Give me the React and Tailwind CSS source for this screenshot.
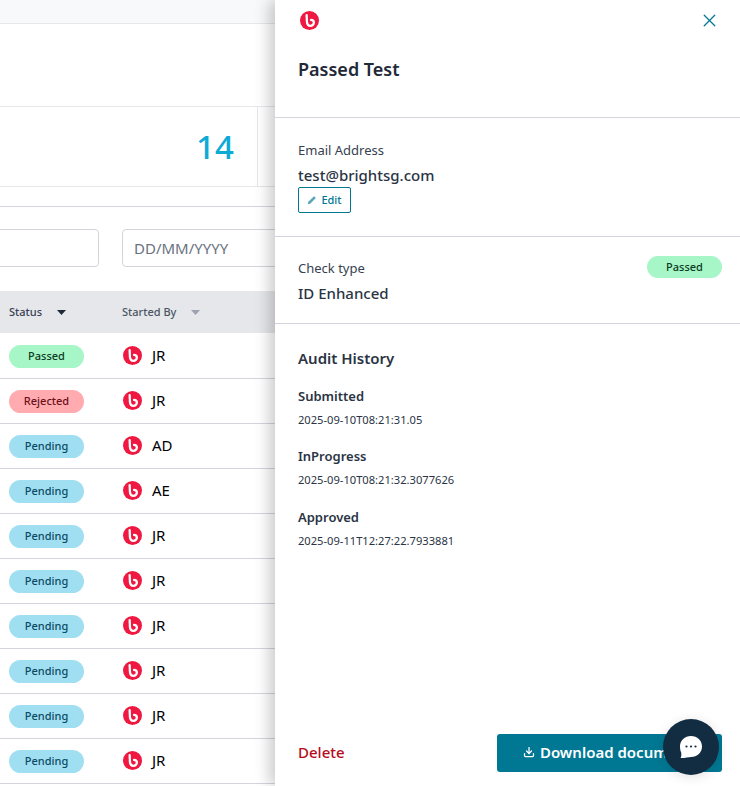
import { Download, X } from "lucide-react";

const rows = [
  { status: "Passed", by: "JR" },
  { status: "Rejected", by: "JR" },
  { status: "Pending", by: "AD" },
  { status: "Pending", by: "AE" },
  { status: "Pending", by: "JR" },
  { status: "Pending", by: "JR" },
  { status: "Pending", by: "JR" },
  { status: "Pending", by: "JR" },
  { status: "Pending", by: "JR" },
  { status: "Pending", by: "JR" },
];

const pillStyles = {
  Passed: "bg-[#a6f6c8] text-[#0d3b22]",
  Rejected: "bg-[#ffabb0] text-[#6b0f1a]",
  Pending: "bg-[#a0dff2] text-[#0c4a63]",
};

const BrandLogo = ({ className }) => (
  <svg viewBox="0 0 20 20" className={className}>
    <circle cx="10" cy="10" r="10" fill="#ee1841" />
    <path
      d="M7 4.4 L7.3 11.5 C7.5 14 9 15.6 11 15.6 C13 15.6 14.6 14 14.6 12.2 C14.6 10.5 13.4 9.4 11.6 9.4"
      fill="none"
      stroke="#fff"
      strokeWidth="2.4"
      strokeLinecap="round"
    />
  </svg>
);

const Pill = ({ status, className }) => (
  <span
    className={`flex w-[75px] items-center justify-center rounded-full text-[11px] font-medium ${pillStyles[status]} ${className}`}
  >
    {status}
  </span>
);

const Caret = ({ color }) => (
  <svg viewBox="0 0 9 5" className="h-[5px] w-[9px]">
    <path d="M0 0 H9 L4.5 5 Z" fill={color} />
  </svg>
);

const AuditEntry = ({ title, time, className }) => (
  <div className={className}>
    <p className="text-[13px] leading-[18px] font-semibold text-[#2a3444]">{title}</p>
    <p className="mt-[6px] text-[11.15px] leading-[18px] text-[#2a3444]">{time}</p>
  </div>
);

const App = () => {
  return (
    <div className="relative flex h-[786px] w-[740px] overflow-hidden bg-white font-['Noto_Sans','Open_Sans',sans-serif]">
      <div className="flex w-[275px] shrink-0 flex-col overflow-hidden">
        <div className="h-[24px] shrink-0 border-b border-[#e5e7eb] bg-[#f8f9fb]" />
        <div className="h-[83px] shrink-0 border-b border-[#e5e7eb]" />
        <div className="flex h-[80px] shrink-0 justify-end border-b border-[#e5e7eb]">
          <div className="flex w-[18px] shrink-0 border-l border-[#e5e7eb]" />
        </div>
        <div className="h-[20px] shrink-0 border-b border-[#d4d4dc]" />
        <div className="flex shrink-0 gap-[23px] pt-[22px]">
          <div className="-ml-3 h-[38px] w-[111px] shrink-0 rounded border border-[#d1d5db]" />
          <div className="flex h-[38px] w-[200px] shrink-0 items-center rounded border border-[#d1d5db] pl-[11px] text-[15px] text-[#6b7280]">
            DD/MM/YYYY
          </div>
        </div>
        <div className="mt-[24px] mb-[1px] flex h-[42px] shrink-0 items-center bg-[#e5e7eb] text-[11px] font-medium text-[#374151]">
          <div className="flex w-[122px] items-center gap-[15px] pl-[9px]">
            Status
            <Caret color="#1f2937" />
          </div>
          <div className="flex items-center gap-[15px] text-[#4b5563]">
            Started By
            <Caret color="#9ca3af" />
          </div>
        </div>
        {rows.map((row, i) => (
          <div
            key={i}
            className="flex h-[45px] shrink-0 items-center border-b border-[#d4d4dc]"
          >
            <div className="w-[123px] pl-[9px]">
              <Pill status={row.status} className="h-[23px]" />
            </div>
            <BrandLogo className="-mt-[2px] h-[19px] w-[19px]" />
            <span className="-mt-[2px] ml-[10px] text-[15px] text-black">{row.by}</span>
          </div>
        ))}
      </div>

      <div className="absolute top-[107px] left-[196px] text-[33px] leading-[80px] font-medium text-[#0eaad6]">
        14
      </div>

      <aside className="flex h-[786px] w-[465px] shrink-0 flex-col bg-white shadow-[-6px_0_14px_rgba(0,0,0,0.2)]">
        <div className="h-[118px] shrink-0 border-b border-[#d4d4dc] px-[23px] pt-[11px]">
          <div className="flex items-start justify-between">
            <BrandLogo className="ml-[2px] h-[19px] w-[19px]" />
            <X className="mt-[-1px] mr-[-3px] h-[21px] w-[21px] text-[#017893]" strokeWidth={1.5} />
          </div>
          <h2 className="mt-[24px] text-[18px] leading-[28px] font-semibold text-[#1f2937]">
            Passed Test
          </h2>
        </div>

        <div className="h-[119px] shrink-0 border-b border-[#d4d4dc] px-[23px] pt-[22px]">
          <p className="text-[13px] leading-[20px] text-[#374151]">Email Address</p>
          <p className="mt-[4px] text-[15px] leading-[22px] font-medium text-[#2a3444]">
            test@brightsg.com
          </p>
          <button className="mt-[1px] flex h-[26px] w-[53px] items-center justify-center gap-[4px] rounded-[2px] border border-[#017893] text-[11px] font-medium text-[#017893]">
            <svg viewBox="0 0 12 12" className="h-[10px] w-[10px]">
              <path d="M1 11 L1.6 8.2 L8.4 1.4 L10.6 3.6 L3.8 10.4 Z" fill="#017893" opacity="0.65" />
            </svg>
            Edit
          </button>
        </div>

        <div className="flex h-[87px] shrink-0 justify-between border-b border-[#d4d4dc] pt-[19px] pr-[18px] pl-[23px]">
          <div className="pt-[2px]">
            <p className="text-[13px] leading-[20px] text-[#374151]">Check type</p>
            <p className="mt-[4px] text-[15px] leading-[22px] font-medium text-[#2a3444]">ID Enhanced</p>
          </div>
          <Pill status="Passed" className="h-[22px]" />
        </div>

        <div className="flex-1 px-[23px] pt-[23px]">
          <h3 className="text-[15px] leading-[22px] font-semibold text-[#2a3444]">Audit History</h3>
          <AuditEntry title="Submitted" time="2025-09-10T08:21:31.05" className="mt-[18px]" />
          <AuditEntry title="InProgress" time="2025-09-10T08:21:32.3077626" className="mt-[18px]" />
          <AuditEntry title="Approved" time="2025-09-11T12:27:22.7933881" className="mt-[19px]" />
        </div>

        <div className="flex shrink-0 items-center justify-between pr-[18px] pb-[14px] pl-[23px]">
          <span className="-mt-[2px] text-[15px] font-medium text-[#b80c1c]">Delete</span>
          <button className="flex h-[38px] w-[225px] items-center justify-center gap-[5px] overflow-hidden rounded-[3px] bg-[#017893] pr-[4px] pb-[2px] text-[15px] font-semibold whitespace-nowrap text-white">
            <Download className="h-[12px] w-[12px]" strokeWidth={2.5} />
            Download document
          </button>
        </div>
      </aside>

      <div className="absolute top-[719px] left-[663px] flex h-[56px] w-[56px] items-center justify-center rounded-full bg-[#122d42] shadow-[0_2px_12px_rgba(0,0,0,0.12)]">
        <svg viewBox="0 0 24 24" className="h-[24px] w-[24px]">
          <path
            d="M12 1 C18.2 1 23 5.6 23 11.5 C23 17.4 18.2 22 12 22 C9.5 22 4 23.5 1.5 23 C2.6 21.2 2.4 19.6 2.2 17.4 C1.4 15.9 1 13.8 1 11.5 C1 5.6 5.8 1 12 1 Z"
            fill="#fff"
          />
          <circle cx="7.5" cy="11.5" r="1.1" fill="#122d42" />
          <circle cx="12" cy="11.5" r="1.1" fill="#122d42" />
          <circle cx="16.5" cy="11.5" r="1.1" fill="#122d42" />
        </svg>
      </div>
    </div>
  );
};

export default App;
